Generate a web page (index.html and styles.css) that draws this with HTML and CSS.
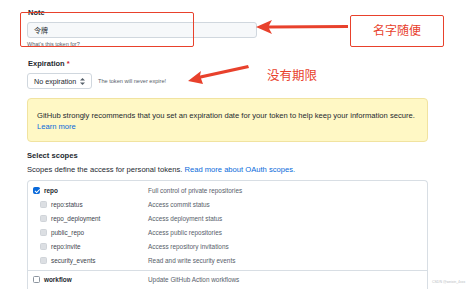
FILE: index.html
```html
<!DOCTYPE html>
<html lang="en">
<head>
    <meta charset="UTF-8">
    <meta name="viewport" content="width=device-width, initial-scale=1.0">
    <title>New personal access token</title>
    <link rel="stylesheet" href="styles.css">
</head>
<body>
    <div class="page">
        <div class="form-group note-group">
            <label class="label">Note</label>
            <div class="input">令牌</div>
            <p class="hint">What's this token for?</p>
        </div>

        <div class="form-group expiration-group">
            <label class="label">Expiration <span class="required">*</span></label>
            <div class="expiry-row">
                <div class="select">
                    No expiration
                    <svg class="caret" width="5" height="7" viewBox="0 0 5 7">
                        <polygon points="2.5,0 5,2.6 0,2.6" fill="#57606a"/>
                        <polygon points="0,4.4 5,4.4 2.5,7" fill="#57606a"/>
                    </svg>
                </div>
                <span class="expiry-note">The token will never expire!</span>
            </div>
        </div>

        <div class="flash-warn">
            <p>GitHub strongly recommends that you set an expiration date for your token to help keep your information secure.</p>
            <a class="link" href="#">Learn more</a>
        </div>

        <h3 class="scopes-title">Select scopes</h3>
        <p class="scopes-desc">Scopes define the access for personal tokens. <a class="link" href="#">Read more about OAuth scopes.</a></p>

        <div class="scopes-table">
            <div class="scope-group">
                <div class="scope-row parent">
                    <span class="scope-name"><span class="check checked"></span>repo</span>
                    <span class="scope-desc">Full control of private repositories</span>
                </div>
                <div class="scope-row child">
                    <span class="scope-name"><span class="check disabled"></span>repo:status</span>
                    <span class="scope-desc">Access commit status</span>
                </div>
                <div class="scope-row child">
                    <span class="scope-name"><span class="check disabled"></span>repo_deployment</span>
                    <span class="scope-desc">Access deployment status</span>
                </div>
                <div class="scope-row child">
                    <span class="scope-name"><span class="check disabled"></span>public_repo</span>
                    <span class="scope-desc">Access public repositories</span>
                </div>
                <div class="scope-row child">
                    <span class="scope-name"><span class="check disabled"></span>repo:invite</span>
                    <span class="scope-desc">Access repository invitations</span>
                </div>
                <div class="scope-row child">
                    <span class="scope-name"><span class="check disabled"></span>security_events</span>
                    <span class="scope-desc">Read and write security events</span>
                </div>
            </div>
            <div class="scope-group">
                <div class="scope-row parent">
                    <span class="scope-name"><span class="check"></span>workflow</span>
                    <span class="scope-desc">Update GitHub Action workflows</span>
                </div>
            </div>
        </div>
    </div>

    <!-- annotations drawn over the screenshot -->
    <div class="mark mark-note"></div>
    <svg class="arrow arrow-note" width="100" height="14" viewBox="0 0 100 14">
        <polygon points="0,7 16,0 13,5.5 92,5 92,8 13,8.5 16,14" fill="#e8412c"/>
    </svg>
    <div class="callout callout-name">名字随便</div>

    <svg class="arrow arrow-expiry" width="62" height="20" viewBox="0 0 62 20">
        <polygon points="0,16 13,6 12,10.5 60,0 61,3 13,13.5 15,19" fill="#e8412c"/>
    </svg>
    <div class="callout-text">没有期限</div>

    <div class="watermark">CSDN @weixin_4xxx</div>
</body>
</html>
```

FILE: styles.css
```css
/* --- General --- */
* {
    margin: 0;
    padding: 0;
    box-sizing: border-box;
}

body {
    background: #fff;
    font-family: 'Liberation Sans', Arial, 'Noto Sans CJK SC', sans-serif;
    color: #24292f;
    font-size: 7.5px;
    height: 289px;
    overflow: hidden;
}

.page {
    width: 401px;
    margin-left: 27px;
    padding-top: 8px;
}

.link {
    color: #0969da;
    text-decoration: none;
}

/* --- Form groups --- */
.label {
    display: block;
    font-weight: bold;
    font-size: 7.5px;
    line-height: 10px;
    margin-left: 1px;
}

.required {
    color: #cf222e;
}

.input {
    margin-top: 4px;
    width: 230px;
    height: 16px;
    background: #f6f8fa;
    border: 1px solid #d0d7de;
    border-radius: 3px;
    padding-left: 6px;
    line-height: 14px;
    font-size: 7px;
    font-family: 'Noto Sans CJK SC', sans-serif;
}

.hint {
    font-size: 5.5px;
    color: #57606a;
    line-height: 8px;
    margin-top: 2px;
}

.expiration-group {
    margin-top: 11px;
}

.expiry-row {
    display: flex;
    align-items: center;
    gap: 6px;
    margin-top: 4px;
}

.select {
    display: flex;
    align-items: center;
    gap: 4px;
    width: 65px;
    height: 16px;
    border: 1px solid #d0d7de;
    border-radius: 3px;
    padding-left: 6px;
    font-size: 7.2px;
    background: #fff;
}

.expiry-note {
    font-size: 5.6px;
    color: #57606a;
}

/* --- Warning flash --- */
.flash-warn {
    margin-top: 9px;
    height: 44px;
    background: #fff8c5;
    border: 1px solid #f1e3a0;
    border-radius: 4px;
    padding: 11px 0 0 9px;
    line-height: 11px;
    font-size: 7.6px;
}

/* --- Scopes --- */
.scopes-title {
    font-size: 7.6px;
    font-weight: bold;
    margin-top: 9px;
    line-height: 10px;
}

.scopes-desc {
    margin-top: 4px;
    line-height: 10px;
    font-size: 7.6px;
}

.scopes-table {
    margin-top: 5px;
    border: 1px solid #d8dee4;
    border-bottom: 0;
    border-radius: 4px 4px 0 0;
    height: 112px;
}

.scope-group + .scope-group {
    border-top: 1px solid #d8dee4;
}

.scope-group:first-child {
    padding: 2px 0 3px;
}

.scope-row {
    display: flex;
    height: 14px;
    align-items: center;
    font-size: 6.4px;
}

.scope-name {
    display: flex;
    align-items: center;
    width: 120px;
    padding-left: 5px;
}

.scope-row.parent .scope-name {
    font-weight: bold;
}

.scope-row.child .scope-name {
    padding-left: 12px;
    color: #3d444d;
}

.scope-desc {
    color: #57606a;
}

.scope-group:last-child .scope-row {
    height: 17px;
}

.check {
    width: 7px;
    height: 7px;
    border: 1px solid #8c959f;
    border-radius: 1.5px;
    margin-right: 4px;
    background: #fff;
    position: relative;
}

.check.checked {
    background: #0969da;
    border-color: #0969da;
}

.check.checked::after {
    content: "";
    position: absolute;
    left: 1.5px;
    top: 0;
    width: 2px;
    height: 3.5px;
    border: solid #fff;
    border-width: 0 1px 1px 0;
    transform: rotate(45deg);
}

.check.disabled {
    background: #dcdfe3;
    border-color: #d0d4d9;
}

/* --- Annotations --- */
.mark {
    position: absolute;
    border: 1.5px solid #e8412c;
    border-radius: 2px;
}

.mark-note {
    left: 20px;
    top: 12px;
    width: 174px;
    height: 35px;
}

.arrow {
    position: absolute;
}

.arrow-note {
    left: 256px;
    top: 20px;
}

.callout {
    position: absolute;
    border: 1px solid #e8412c;
    border-radius: 2px;
    color: #e8412c;
    font-family: 'Noto Sans CJK SC', sans-serif;
    font-size: 12px;
    display: flex;
    align-items: center;
    justify-content: center;
}

.callout-name {
    left: 350px;
    top: 15px;
    width: 94px;
    height: 32px;
    padding-bottom: 3px;
}

.arrow-expiry {
    left: 188px;
    top: 65px;
}

.callout-text {
    position: absolute;
    left: 267px;
    top: 67px;
    color: #e8412c;
    font-family: 'Noto Sans CJK SC', sans-serif;
    font-size: 12.5px;
    line-height: 16px;
}

.watermark {
    position: absolute;
    left: 432px;
    top: 280px;
    font-size: 3.5px;
    color: #b8bcc2;
}
```
